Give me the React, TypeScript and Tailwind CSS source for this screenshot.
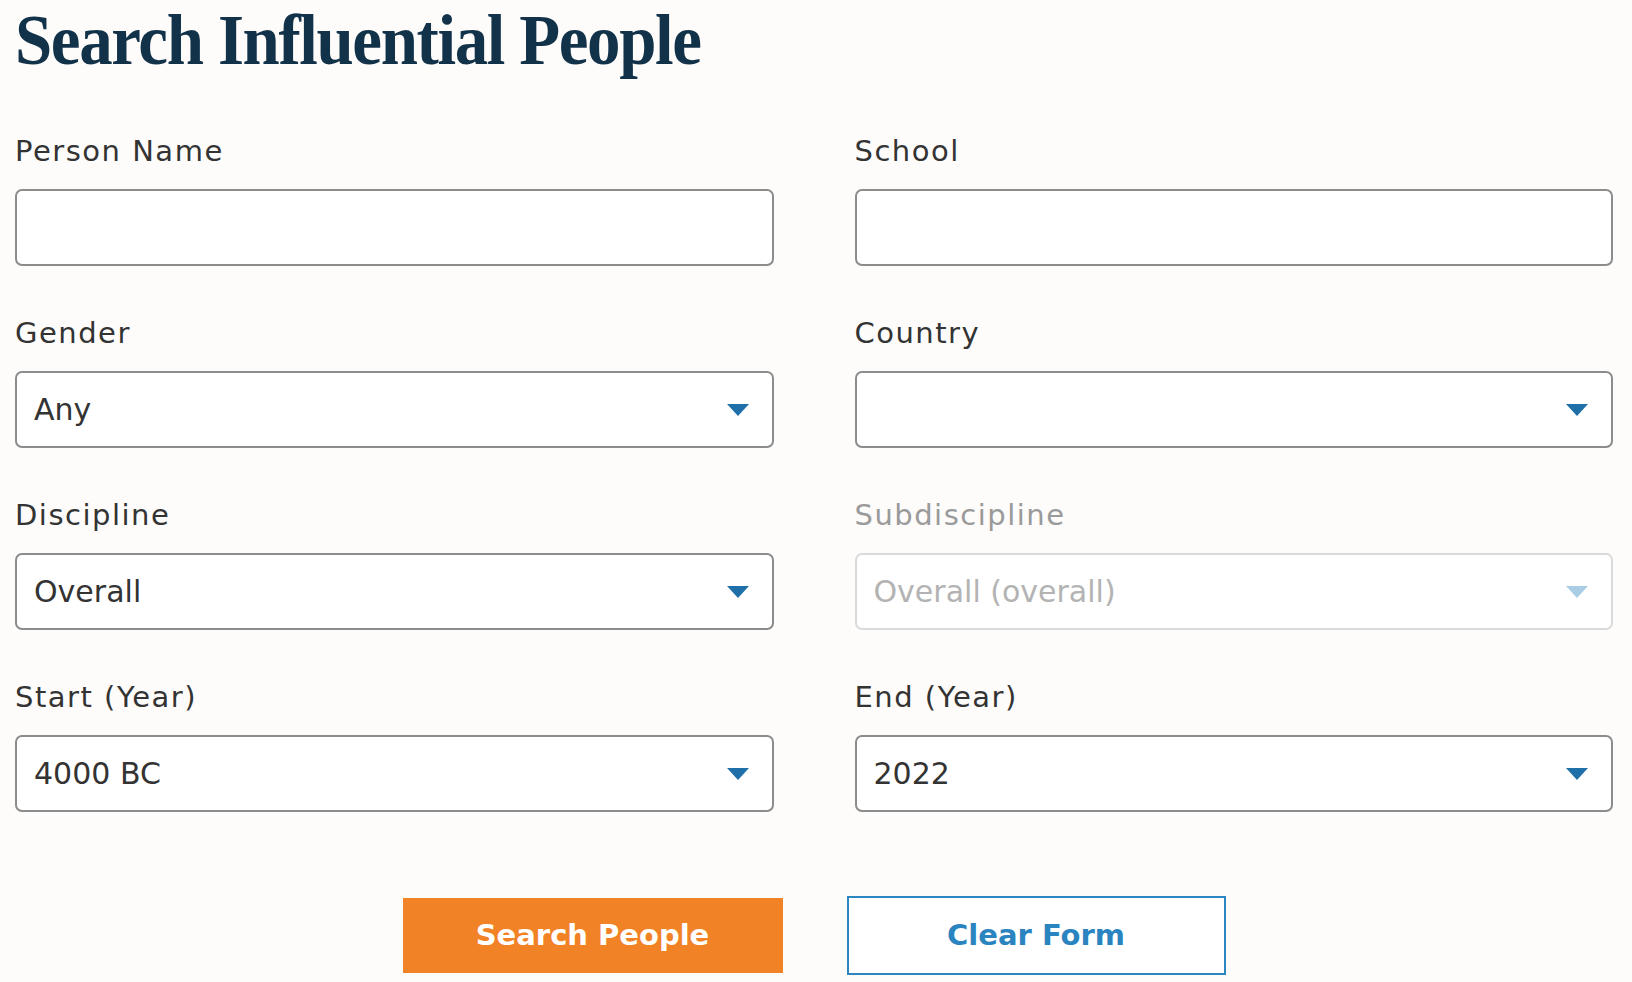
import React from "react";

const Arrow = ({ disabled }: { disabled?: boolean }) => (
  <svg width="22" height="12" viewBox="0 0 22 12" className="shrink-0">
    <path d="M0 0 H22 L11 12 Z" fill={disabled ? "#a9cde4" : "#1f6fa8"} />
  </svg>
);

const Field = ({
  label,
  value,
  select,
  disabled,
}: {
  label: string;
  value?: string;
  select?: boolean;
  disabled?: boolean;
}) => (
  <div className="flex flex-col">
    <label
      className={`h-[40px] leading-[40px] text-[29px] tracking-[1.5px] mb-[18px] ${
        disabled ? "text-[#9a9a9a]" : "text-[#333333]"
      }`}
    >
      {label}
    </label>
    <div
      className={`h-[77px] rounded-[7px] bg-white flex items-center justify-between pl-[17px] pr-[23px] border-2 ${
        disabled ? "border-[#dadada]" : "border-[#8c8c8c]"
      }`}
    >
      <span
        className={`text-[30px] ${disabled ? "text-[#b3b3b3]" : "text-[#333333]"}`}
      >
        {value}
      </span>
      {select && <Arrow disabled={disabled} />}
    </div>
  </div>
);

export default function App() {
  return (
    <div
      className="min-h-screen w-full bg-[#fdfcfa] pl-[15px] pr-[19px] pb-10"
      style={{ fontFamily: "'DejaVu Sans', 'Open Sans', sans-serif" }}
    >
      <h1
        className="text-[72px] leading-[80px] font-bold text-[#12324a] tracking-[-1.5px] origin-left scale-x-[0.93] whitespace-nowrap mb-[51px]"
        style={{ fontFamily: "'Liberation Serif', 'DejaVu Serif', serif" }}
      >
        Search Influential People
      </h1>
      <div className="grid grid-cols-2 gap-x-[81px] gap-y-[47px]">
        <Field label="Person Name" />
        <Field label="School" />
        <Field label="Gender" value="Any" select />
        <Field label="Country" select />
        <Field label="Discipline" value="Overall" select />
        <Field label="Subdiscipline" value="Overall (overall)" select disabled />
        <Field label="Start (Year)" value="4000 BC" select />
        <Field label="End (Year)" value="2022" select />
      </div>
      <div className="flex justify-center items-center gap-[64px] mt-[84px]">
        <button className="w-[380px] h-[75px] bg-[#f28226] text-white text-[29px] font-bold">
          Search People
        </button>
        <button className="w-[379px] h-[79px] bg-white border-2 border-[#2e86c1] text-[#2a84bf] text-[29px] font-bold">
          Clear Form
        </button>
      </div>
    </div>
  );
}
